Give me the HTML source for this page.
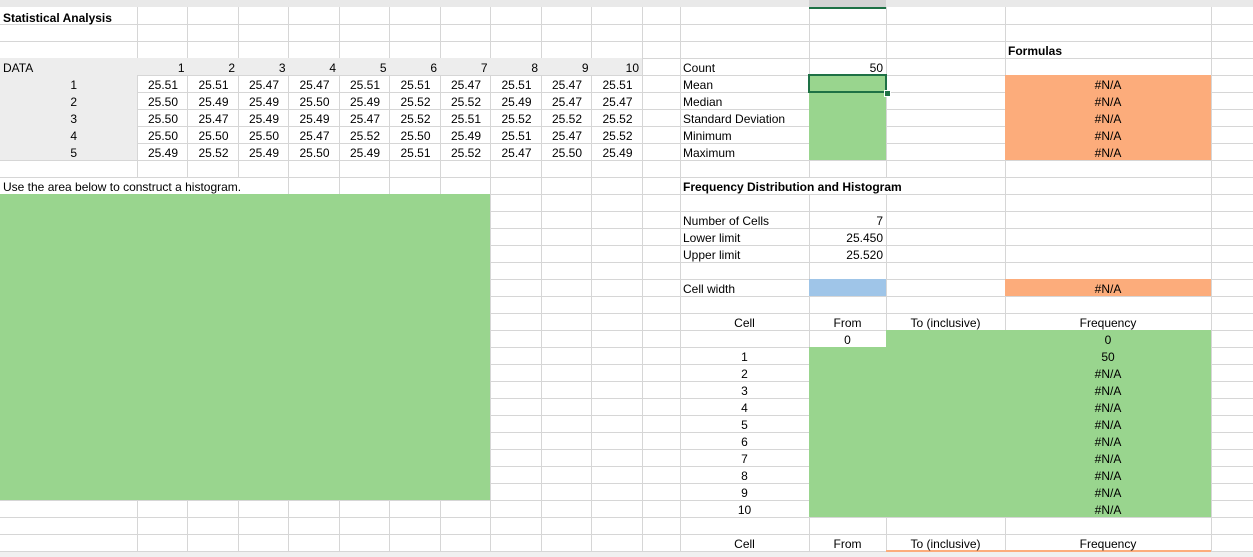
<!DOCTYPE html>
<html><head><meta charset="utf-8"><style>
body{margin:0;width:1253px;height:557px;overflow:hidden;background:#fff;font-family:"Liberation Sans",Arial,sans-serif;font-size:12px;color:#000;position:relative}
.g{position:absolute;left:0;top:24px;width:1253px;height:528px;background:repeating-linear-gradient(to bottom,#d6d6d6 0,#d6d6d6 1px,transparent 1px,transparent 17px)}
.v{position:absolute;top:0;width:1px;height:552px;background:#d6d6d6}
.f{position:absolute}
.c{position:absolute;height:16px;line-height:17px;padding-top:2px;white-space:nowrap}
.r{text-align:right}.m{text-align:center}.b{font-weight:bold}
.gr{background:#99d58e}.or{background:#fcac7b}
.w{position:absolute;background:#fff;height:16px}
</style></head><body>
<div class="g"></div>
<div class="v" style="left:137px"></div><div class="v" style="left:187px"></div><div class="v" style="left:238px"></div><div class="v" style="left:288px"></div><div class="v" style="left:339px"></div><div class="v" style="left:389px"></div><div class="v" style="left:440px"></div><div class="v" style="left:490px"></div><div class="v" style="left:541px"></div><div class="v" style="left:591px"></div><div class="v" style="left:642px"></div><div class="v" style="left:680px"></div><div class="v" style="left:809px"></div><div class="v" style="left:886px"></div><div class="v" style="left:1005px"></div><div class="v" style="left:1211px"></div>
<div class="f" style="left:0;top:0;width:1253px;height:7px;background:#e9e9e9"></div>
<div class="f" style="left:809px;top:0;width:77px;height:7px;background:#d4d4d4;border-bottom:2px solid #1e7145"></div>
<div class="f" style="left:0;top:552px;width:1253px;height:5px;background:#f0f0f0"></div>
<div class="f" style="left:0;top:58px;width:642px;height:17px;background:#ededed"></div>
<div class="f" style="left:0;top:75px;width:137px;height:85px;background:#ededed"></div>
<div class="w" style="left:1px;top:178px;width:250px"></div>
<div class="w" style="left:681px;top:178px;width:230px"></div>
<div class="w" style="left:1px;top:8px;width:118px"></div>
<div class="f gr" style="left:809px;top:75px;width:77px;height:85px"></div>
<div class="f" style="left:808px;top:74px;width:75px;height:15px;border:2px solid #1e7145"></div>
<div class="f" style="left:884px;top:90px;width:5px;height:5px;background:#1e7145;border:1px solid #fff"></div>
<div class="f or" style="left:1005px;top:75px;width:206px;height:85px"></div>
<div class="f gr" style="left:0;top:194px;width:490px;height:306px"></div>
<div class="f" style="left:809px;top:279px;width:77px;height:17px;background:#9fc5e8"></div>
<div class="f or" style="left:1005px;top:279px;width:206px;height:17px"></div>
<div class="f gr" style="left:886px;top:330px;width:325px;height:17px"></div>
<div class="f gr" style="left:809px;top:347px;width:402px;height:170px"></div>
<div class="f" style="left:886px;top:550px;width:325px;height:2px;background:#fcac7b"></div>

<div class="c b" style="left:3px;top:8px">Statistical Analysis</div>
<div class="c b" style="left:1008px;top:41px">Formulas</div>
<div class="c" style="left:3px;top:58px">DATA</div>
<div class="c r" style="left:137px;top:58px;width:505px">
<span style="display:inline-block;width:41px">1</span><span style="display:inline-block;width:50.5px">2</span><span style="display:inline-block;width:50.5px">3</span><span style="display:inline-block;width:50.5px">4</span><span style="display:inline-block;width:50.5px">5</span><span style="display:inline-block;width:50.5px">6</span><span style="display:inline-block;width:50.5px">7</span><span style="display:inline-block;width:50.5px">8</span><span style="display:inline-block;width:50.5px">9</span><span style="display:inline-block;width:50.5px;padding-right:3px">10</span></div>
<div class="c r" style="left:0;top:75px;width:77px">1</div>
<div class="c r" style="left:0;top:92px;width:77px">2</div>
<div class="c r" style="left:0;top:109px;width:77px">3</div>
<div class="c r" style="left:0;top:126px;width:77px">4</div>
<div class="c r" style="left:0;top:143px;width:77px">5</div>

<div class="c" style="left:148px;top:75px"><span style="display:inline-block;width:50.5px">25.51</span><span style="display:inline-block;width:50.5px">25.51</span><span style="display:inline-block;width:50.5px">25.47</span><span style="display:inline-block;width:50.5px">25.47</span><span style="display:inline-block;width:50.5px">25.51</span><span style="display:inline-block;width:50.5px">25.51</span><span style="display:inline-block;width:50.5px">25.47</span><span style="display:inline-block;width:50.5px">25.51</span><span style="display:inline-block;width:50.5px">25.47</span><span style="display:inline-block;width:50.5px">25.51</span></div>
<div class="c" style="left:148px;top:92px"><span style="display:inline-block;width:50.5px">25.50</span><span style="display:inline-block;width:50.5px">25.49</span><span style="display:inline-block;width:50.5px">25.49</span><span style="display:inline-block;width:50.5px">25.50</span><span style="display:inline-block;width:50.5px">25.49</span><span style="display:inline-block;width:50.5px">25.52</span><span style="display:inline-block;width:50.5px">25.52</span><span style="display:inline-block;width:50.5px">25.49</span><span style="display:inline-block;width:50.5px">25.47</span><span style="display:inline-block;width:50.5px">25.47</span></div>
<div class="c" style="left:148px;top:109px"><span style="display:inline-block;width:50.5px">25.50</span><span style="display:inline-block;width:50.5px">25.47</span><span style="display:inline-block;width:50.5px">25.49</span><span style="display:inline-block;width:50.5px">25.49</span><span style="display:inline-block;width:50.5px">25.47</span><span style="display:inline-block;width:50.5px">25.52</span><span style="display:inline-block;width:50.5px">25.51</span><span style="display:inline-block;width:50.5px">25.52</span><span style="display:inline-block;width:50.5px">25.52</span><span style="display:inline-block;width:50.5px">25.52</span></div>
<div class="c" style="left:148px;top:126px"><span style="display:inline-block;width:50.5px">25.50</span><span style="display:inline-block;width:50.5px">25.50</span><span style="display:inline-block;width:50.5px">25.50</span><span style="display:inline-block;width:50.5px">25.47</span><span style="display:inline-block;width:50.5px">25.52</span><span style="display:inline-block;width:50.5px">25.50</span><span style="display:inline-block;width:50.5px">25.49</span><span style="display:inline-block;width:50.5px">25.51</span><span style="display:inline-block;width:50.5px">25.47</span><span style="display:inline-block;width:50.5px">25.52</span></div>
<div class="c" style="left:148px;top:143px"><span style="display:inline-block;width:50.5px">25.49</span><span style="display:inline-block;width:50.5px">25.52</span><span style="display:inline-block;width:50.5px">25.49</span><span style="display:inline-block;width:50.5px">25.50</span><span style="display:inline-block;width:50.5px">25.49</span><span style="display:inline-block;width:50.5px">25.51</span><span style="display:inline-block;width:50.5px">25.52</span><span style="display:inline-block;width:50.5px">25.47</span><span style="display:inline-block;width:50.5px">25.50</span><span style="display:inline-block;width:50.5px">25.49</span></div>

<div class="c" style="left:683px;top:58px">Count</div><div class="c r" style="left:809px;top:58px;width:74px">50</div>
<div class="c" style="left:683px;top:75px">Mean</div>
<div class="c" style="left:683px;top:92px">Median</div>
<div class="c" style="left:683px;top:109px">Standard Deviation</div>
<div class="c" style="left:683px;top:126px">Minimum</div>
<div class="c" style="left:683px;top:143px">Maximum</div>
<div class="c m" style="left:1005px;top:75px;width:206px">#N/A</div>
<div class="c m" style="left:1005px;top:92px;width:206px">#N/A</div>
<div class="c m" style="left:1005px;top:109px;width:206px">#N/A</div>
<div class="c m" style="left:1005px;top:126px;width:206px">#N/A</div>
<div class="c m" style="left:1005px;top:143px;width:206px">#N/A</div>

<div class="c" style="left:3px;top:177px">Use the area below to construct a histogram.</div>
<div class="c b" style="left:683px;top:177px">Frequency Distribution and Histogram</div>
<div class="c" style="left:683px;top:211px">Number of Cells</div><div class="c r" style="left:809px;top:211px;width:74px">7</div>
<div class="c" style="left:683px;top:228px">Lower limit</div><div class="c r" style="left:809px;top:228px;width:74px">25.450</div>
<div class="c" style="left:683px;top:245px">Upper limit</div><div class="c r" style="left:809px;top:245px;width:74px">25.520</div>
<div class="c" style="left:683px;top:279px">Cell width</div><div class="c m" style="left:1005px;top:279px;width:206px">#N/A</div>

<div class="c m" style="left:680px;top:313px;width:129px">Cell</div>
<div class="c m" style="left:809px;top:313px;width:77px">From</div>
<div class="c m" style="left:886px;top:313px;width:119px">To (inclusive)</div>
<div class="c m" style="left:1005px;top:313px;width:206px">Frequency</div>
<div class="c m" style="left:809px;top:330px;width:77px">0</div>
<div class="c m" style="left:1005px;top:330px;width:206px">0</div>

<div class="c m" style="left:680px;top:347px;width:129px">1</div><div class="c m" style="left:1005px;top:347px;width:206px">50</div>
<div class="c m" style="left:680px;top:364px;width:129px">2</div><div class="c m" style="left:1005px;top:364px;width:206px">#N/A</div>
<div class="c m" style="left:680px;top:381px;width:129px">3</div><div class="c m" style="left:1005px;top:381px;width:206px">#N/A</div>
<div class="c m" style="left:680px;top:398px;width:129px">4</div><div class="c m" style="left:1005px;top:398px;width:206px">#N/A</div>
<div class="c m" style="left:680px;top:415px;width:129px">5</div><div class="c m" style="left:1005px;top:415px;width:206px">#N/A</div>
<div class="c m" style="left:680px;top:432px;width:129px">6</div><div class="c m" style="left:1005px;top:432px;width:206px">#N/A</div>
<div class="c m" style="left:680px;top:449px;width:129px">7</div><div class="c m" style="left:1005px;top:449px;width:206px">#N/A</div>
<div class="c m" style="left:680px;top:466px;width:129px">8</div><div class="c m" style="left:1005px;top:466px;width:206px">#N/A</div>
<div class="c m" style="left:680px;top:483px;width:129px">9</div><div class="c m" style="left:1005px;top:483px;width:206px">#N/A</div>
<div class="c m" style="left:680px;top:500px;width:129px">10</div><div class="c m" style="left:1005px;top:500px;width:206px">#N/A</div>

<div class="c m" style="left:680px;top:534px;width:129px">Cell</div>
<div class="c m" style="left:809px;top:534px;width:77px">From</div>
<div class="c m" style="left:886px;top:534px;width:119px">To (inclusive)</div>
<div class="c m" style="left:1005px;top:534px;width:206px">Frequency</div>
</body></html>
